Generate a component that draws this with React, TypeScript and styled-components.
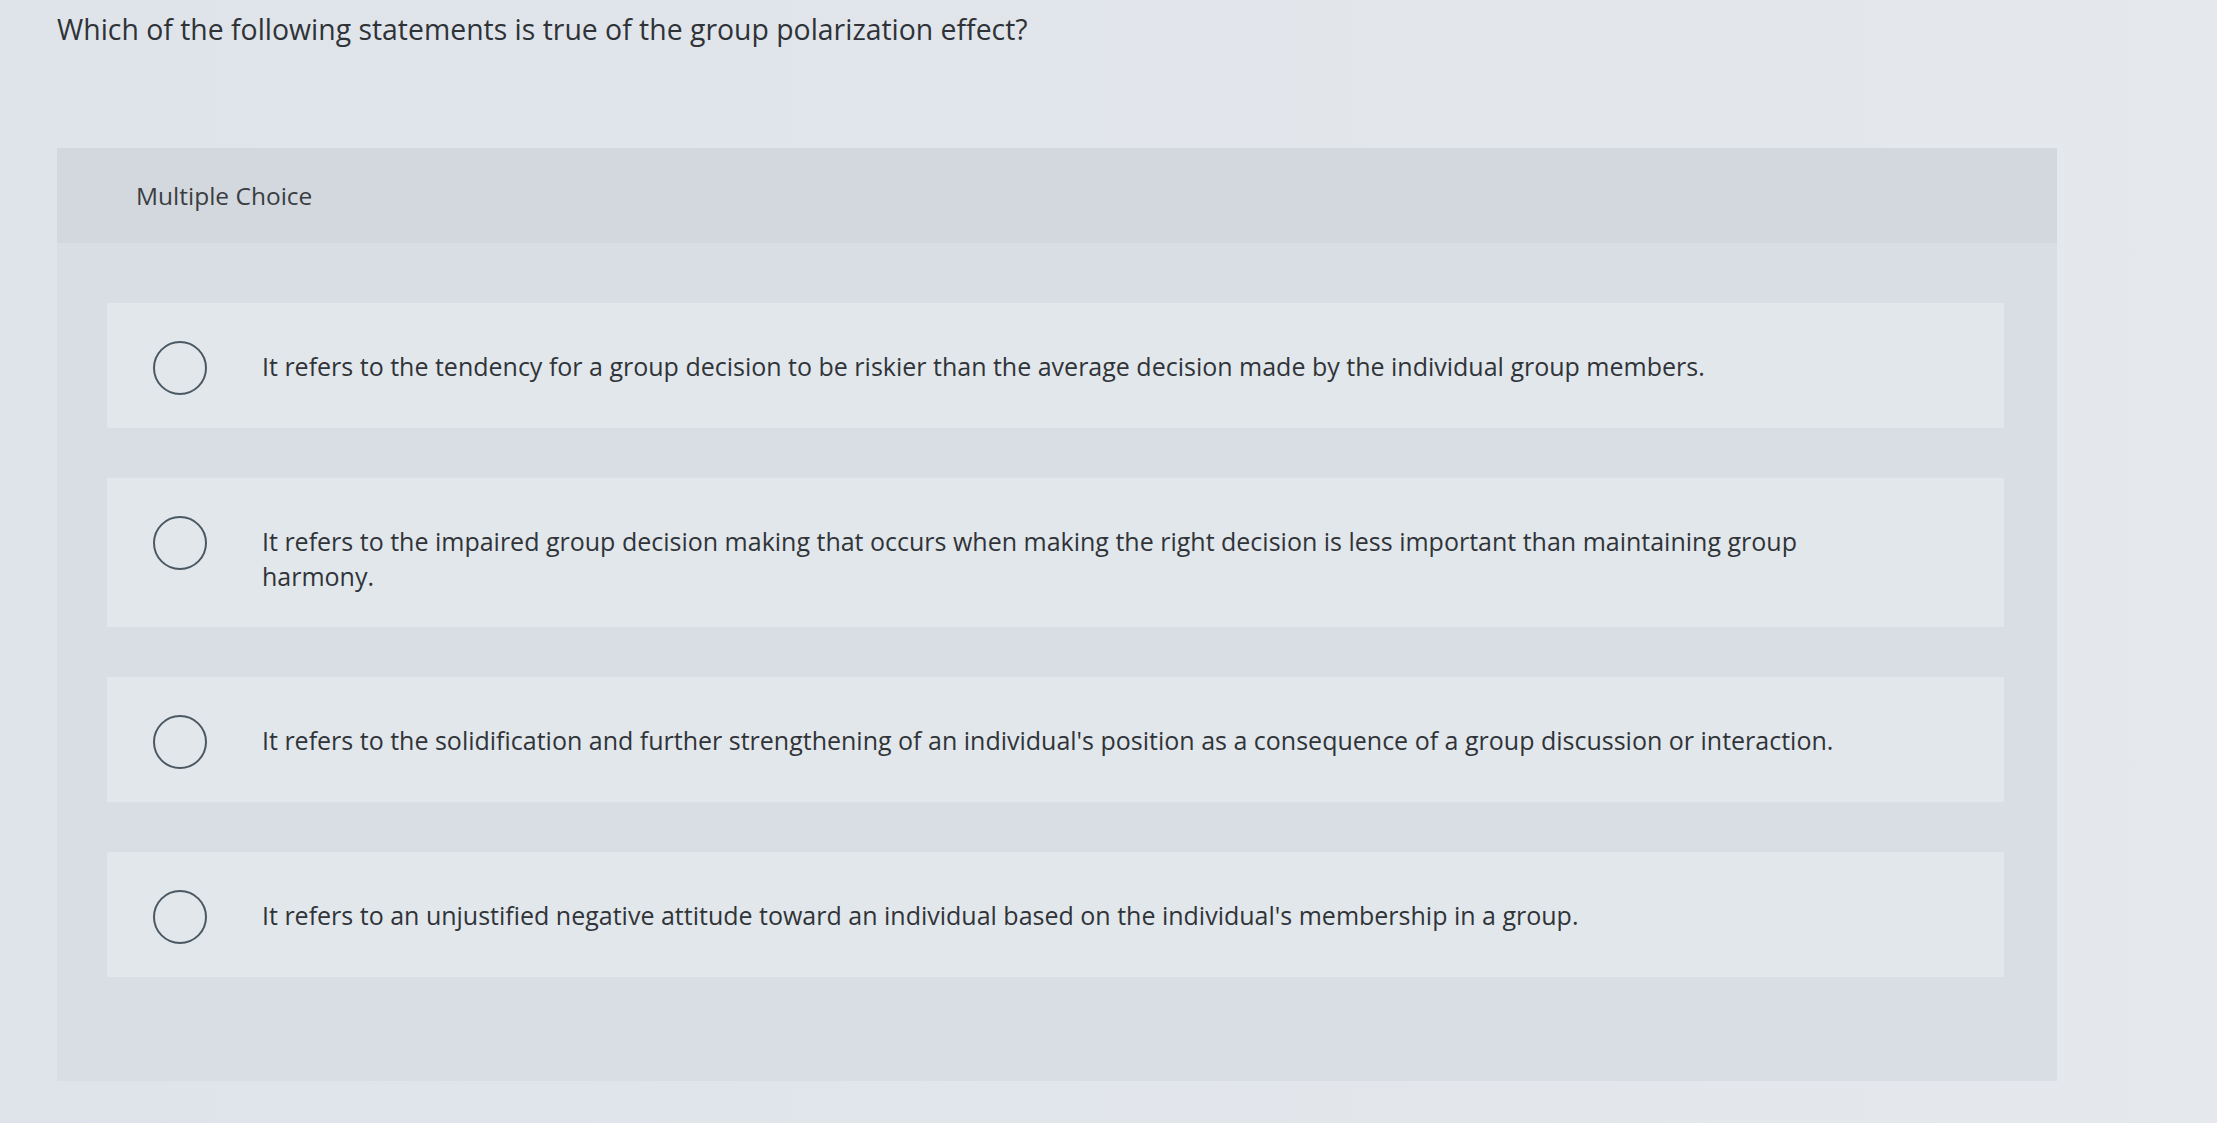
import React from 'react';
import styled, {createGlobalStyle} from 'styled-components';

const GlobalStyle = createGlobalStyle`
  html, body {
    margin: 0;
    padding: 0;
    background: #e0e5ea;
  }
  body {
    font-family: "Open Sans", Lato, "Liberation Sans", sans-serif;
    color: #34383c;
  }
`

type OptionType = {
    id: number
    text: string
}

const options: OptionType[] = [
    {id: 1, text: 'It refers to the tendency for a group decision to be riskier than the average decision made by the individual group members.'},
    {id: 2, text: 'It refers to the impaired group decision making that occurs when making the right decision is less important than maintaining group harmony.'},
    {id: 3, text: "It refers to the solidification and further strengthening of an individual's position as a consequence of a group discussion or interaction."},
    {id: 4, text: "It refers to an unjustified negative attitude toward an individual based on the individual's membership in a group."},
]

export default function App() {
    return (
        <>
            <GlobalStyle/>
            <Page>
                <Question>Which of the following statements is true of the group polarization effect?</Question>
                <Panel>
                    <PanelHeader>Multiple Choice</PanelHeader>
                    <OptionList>
                        {options.map(o => (
                            <Option key={o.id}>
                                <Radio/>
                                <OptionText>{o.text}</OptionText>
                            </Option>
                        ))}
                    </OptionList>
                </Panel>
            </Page>
        </>
    );
}

const Page = styled.div`
  min-height: 1123px;
  padding: 10px 160px 45px 57px;
  box-sizing: border-box;
  background: linear-gradient(90deg, #dfe4ea 0%, #e2e6eb 60%, #e5e9ed 100%);
`

const Question = styled.h1`
  margin: 0;
  font-size: 28.4px;
  font-weight: 400;
  line-height: 38px;
  color: #2f3337;
`

const Panel = styled.section`
  margin-top: 100px;
  width: 2000px;
  background: #d9dee4;
  padding-bottom: 104px;
`

const PanelHeader = styled.div`
  height: 95px;
  display: flex;
  align-items: center;
  padding-left: 79px;
  background: #d3d8de;
  font-size: 24.5px;
  color: #3a3e42;
`

const OptionList = styled.div`
  display: flex;
  flex-direction: column;
  gap: 50px;
  padding: 60px 53px 0 50px;
`

const Option = styled.div`
  display: flex;
  align-items: flex-start;
  padding: 38px 0 33px 46px;
  background: #e2e7ec;
`

const Radio = styled.span`
  flex: none;
  width: 50px;
  height: 50px;
  border: 2.5px solid #4a5862;
  border-radius: 50%;
`

const OptionText = styled.p`
  margin: 8px 0 0 55px;
  max-width: 1590px;
  font-size: 25px;
  line-height: 35px;
  color: #303438;
`
